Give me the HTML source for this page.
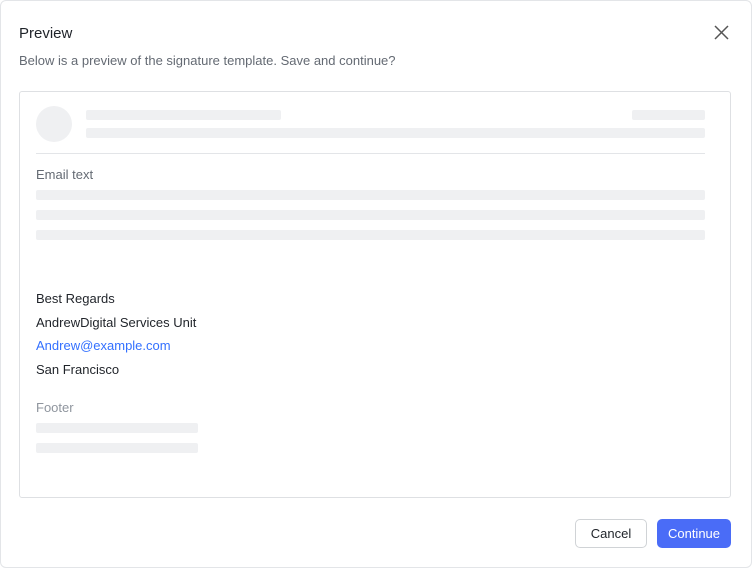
<!DOCTYPE html>
<html><head><style>
*{margin:0;padding:0;box-sizing:border-box}
body{width:752px;height:568px;background:#fff;font-family:"Liberation Sans",sans-serif;position:relative;overflow:hidden}
.a{position:absolute}
.outer{left:0;top:0;width:752px;height:568px;border:1px solid #e3e5e8;border-radius:6px}
.sk{position:absolute;background:#eff0f2;border-radius:2px}
.t{position:absolute;font-size:13px;color:#1f2329;white-space:nowrap}
</style></head><body>
<div class="a outer"></div>
<div class="t" style="left:19px;top:25px;font-size:15px;font-weight:500">Preview</div>
<svg class="a" style="left:713px;top:24px" width="17" height="17" viewBox="0 0 17 17"><path d="M2 2L15 15M15 2L2 15" stroke="#555" stroke-width="1.5" fill="none"/></svg>
<div class="t" style="left:19px;top:53px;color:#646a73">Below is a preview of the signature template. Save and continue?</div>
<div class="a" style="left:19px;top:91px;width:712px;height:407px;border:1px solid #dee0e3;border-radius:3px"></div>
<div class="sk" style="left:36px;top:106px;width:36px;height:36px;border-radius:50%"></div>
<div class="sk" style="left:86px;top:110px;width:195px;height:10px"></div>
<div class="sk" style="left:632px;top:110px;width:73px;height:10px"></div>
<div class="sk" style="left:86px;top:128px;width:619px;height:10px"></div>
<div class="a" style="left:36px;top:153px;width:669px;height:1px;background:#e3e5e8"></div>
<div class="t" style="left:36px;top:167px;color:#646a73">Email text</div>
<div class="sk" style="left:36px;top:190px;width:669px;height:10px"></div>
<div class="sk" style="left:36px;top:210px;width:669px;height:10px"></div>
<div class="sk" style="left:36px;top:230px;width:669px;height:10px"></div>
<div class="t" style="left:36px;top:291px">Best Regards</div>
<div class="t" style="left:36px;top:315px">AndrewDigital Services Unit</div>
<div class="t" style="left:36px;top:338px;color:#3370ff">Andrew@example.com</div>
<div class="t" style="left:36px;top:362px">San Francisco</div>
<div class="t" style="left:36px;top:400px;color:#8f959e">Footer</div>
<div class="sk" style="left:36px;top:423px;width:162px;height:10px"></div>
<div class="sk" style="left:36px;top:443px;width:162px;height:10px"></div>
<div class="a" style="left:575px;top:519px;width:72px;height:29px;border:1px solid #d0d3d6;border-radius:5px;font-size:13px;color:#1f2329;text-align:center;line-height:27px">Cancel</div>
<div class="a" style="left:657px;top:519px;width:74px;height:29px;background:#4a6cf7;border-radius:5px;font-size:13px;color:#fff;text-align:center;line-height:29px">Continue</div>
</body></html>
